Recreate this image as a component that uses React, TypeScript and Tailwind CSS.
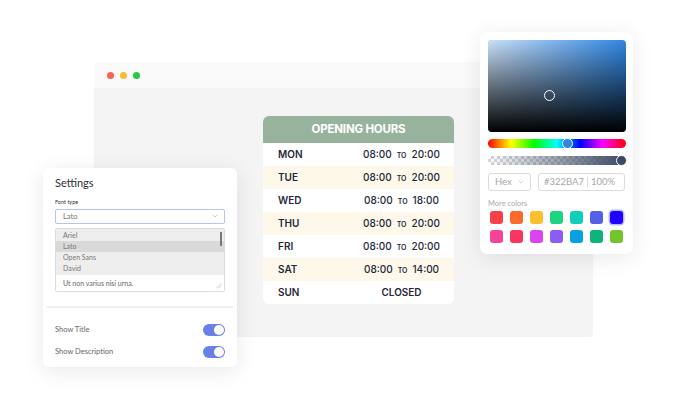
import { ChevronDown } from "lucide-react"

type Hours = {
    day: string
    open?: string
    close?: string
}

const hours: Hours[] = [
    { day: "MON", open: "08:00", close: "20:00" },
    { day: "TUE", open: "08:00", close: "20:00" },
    { day: "WED", open: "08:00", close: "18:00" },
    { day: "THU", open: "08:00", close: "20:00" },
    { day: "FRI", open: "08:00", close: "20:00" },
    { day: "SAT", open: "08:00", close: "14:00" },
    { day: "SUN" }
]

const swatches = [
    ["bg-[#f8404a]", "bg-[#fb6a2b]", "bg-[#fbc02d]", "bg-[#1ed47e]", "bg-[#10cfb8]", "bg-[#5560e9]", "bg-[#2200ff]"],
    ["bg-[#f34497]", "bg-[#fb355d]", "bg-[#d946ef]", "bg-[#8b5cf6]", "bg-[#0aa0e8]", "bg-[#0eb27c]", "bg-[#74c52c]"]
]

function OpeningHours() {
    return (
        <div className="w-[191px] overflow-hidden rounded-[6px] bg-white font-['Inter',sans-serif] text-[#1f2a3c]">
            <div className="flex h-[27px] items-center justify-center bg-[#98b39d] text-[11.5px] font-bold tracking-[-0.2px] text-white">
                OPENING HOURS
            </div>
            {hours.map((row, i) => (
                <div
                    key={row.day}
                    className={`flex h-[23px] items-center pl-[15px] pr-[16px] ${i % 2 === 1 ? "bg-[#fdf8ea]" : "bg-white"}`}
                >
                    <div className="flex-1 text-[10px] font-semibold">{row.day}</div>
                    <div className="flex w-[73px] items-baseline justify-center text-[10px] font-medium">
                        {row.open ? (
                            <>
                                <span>{row.open}</span>
                                <span className="mx-[5px] text-[7px] font-semibold">TO</span>
                                <span>{row.close}</span>
                            </>
                        ) : (
                            <span className="text-[10px] font-semibold">CLOSED</span>
                        )}
                    </div>
                </div>
            ))}
        </div>
    )
}

function Toggle() {
    return (
        <div className="flex h-[12px] w-[22px] items-center justify-end rounded-full bg-[#6a80e6] pr-[1px]">
            <div className="h-[10px] w-[10px] rounded-full bg-white" />
        </div>
    )
}

function SettingsPanel() {
    return (
        <div className="absolute left-[43px] top-[168px] h-[199px] w-[194px] rounded-[6px] bg-white font-['Lato',sans-serif] shadow-[0_4px_22px_rgba(0,0,0,0.09)]">
            <div className="px-[12px] pt-[7px]">
                <div className="text-[11px] text-[#2b2f36]">Settings</div>
                <div className="mt-[6px] text-[5.5px] text-[#333]">Font type</div>
                <div className="mt-[3px] flex h-[15px] items-center justify-between rounded-[2px] border border-[#b9c3f2] pl-[7px] pr-[5px] text-[7.5px] text-[#777]">
                    <span>Lato</span>
                    <ChevronDown className="h-[8px] w-[8px] text-[#999]" strokeWidth={1.5} />
                </div>
                <div className="mt-[4px] rounded-[2px] border border-[#dcdcdc]">
                    <div className="relative bg-[#eeeeee] py-[1px] text-[7px] text-[#777]">
                        <div className="flex h-[11px] items-center pl-[7px]">Ariel</div>
                        <div className="flex h-[11px] items-center bg-[#d9d9d9] pl-[7px]">Lato</div>
                        <div className="flex h-[11px] items-center pl-[7px]">Open Sans</div>
                        <div className="flex h-[11px] items-center pl-[7px]">David</div>
                        <div className="absolute right-[2px] top-[3px] h-[14px] w-[2px] bg-[#7a7a7a]" />
                    </div>
                    <div className="relative flex h-[16px] items-center bg-white pl-[7px] text-[7px] text-[#666]">
                        Ut non varius nisi urna.
                        <svg className="absolute bottom-[2px] right-[2px]" width="7" height="7" viewBox="0 0 7 7">
                            <path d="M1 6.5 L6.5 1 M3.5 6.5 L6.5 3.5" stroke="#c8c8c8" strokeWidth="0.8" />
                        </svg>
                    </div>
                </div>
            </div>
            <div className="mx-[4px] mt-[14px] h-[2px] bg-[#eeeeee]" />
            <div className="px-[12px] pt-[16px] text-[7.5px] text-[#666]">
                <div className="flex h-[12px] items-center justify-between">
                    <span>Show Title</span>
                    <Toggle />
                </div>
                <div className="mt-[10px] flex h-[12px] items-center justify-between">
                    <span>Show Description</span>
                    <Toggle />
                </div>
            </div>
        </div>
    )
}

function ColorPicker() {
    return (
        <div className="absolute left-[480px] top-[32px] h-[222px] w-[153px] rounded-[7px] bg-white px-[8px] pt-[8px] font-['Lato',sans-serif] shadow-[0_4px_22px_rgba(0,0,0,0.09)]">
            <div className="relative h-[92px] w-[138px] overflow-hidden rounded-[4px] bg-[#2f86e3]">
                <div className="absolute inset-0 bg-gradient-to-r from-white/75 to-transparent" />
                <div className="absolute inset-0 bg-gradient-to-b from-transparent to-black" />
                <div className="absolute left-[56px] top-[50px] h-[11px] w-[11px] rounded-full border-[1.5px] border-white" />
            </div>
            <div className="relative mt-[7px] h-[9px] w-[138px] rounded-full bg-[linear-gradient(to_right,#ff0000,#ffff00,#00ff00,#00ffff,#0000ff,#ff00ff,#ff0000)]">
                <div className="absolute left-[74px] top-[-1px] h-[11px] w-[11px] rounded-full border-[1.5px] border-white bg-[#2f86e3]" />
            </div>
            <div className="relative mt-[8px] h-[9px] w-[138px] rounded-full bg-[repeating-conic-gradient(#d6d6d6_0_25%,#ffffff_0_50%)] bg-[length:6px_6px]">
                <div className="absolute inset-0 rounded-full bg-gradient-to-r from-transparent to-[#3a4a62]" />
                <div className="absolute right-[-1px] top-[-1px] h-[11px] w-[11px] rounded-full border-[1.5px] border-white bg-[#3a4a62]" />
            </div>
            <div className="mt-[8px] flex gap-[7px] text-[9.5px] text-[#a8a8a8]">
                <div className="flex h-[18px] w-[43px] items-center justify-between rounded-[3px] border border-[#dcdcdc] pl-[6px] pr-[5px]">
                    <span>Hex</span>
                    <ChevronDown className="h-[8px] w-[8px]" strokeWidth={1.5} />
                </div>
                <div className="flex h-[18px] flex-1 items-center rounded-[3px] border border-[#dcdcdc] pl-[5px]">
                    <span>#322BA7</span>
                    <span className="mx-[3px] h-[10px] w-px bg-[#dcdcdc]" />
                    <span>100%</span>
                </div>
            </div>
            <div className="mt-[7px] text-[7.5px] text-[#aaaaaa]">More colors</div>
            <div className="mt-[2px] flex flex-col gap-[6px]">
                {swatches.map((row, r) => (
                    <div key={r} className="flex gap-[7px] pl-[2px]">
                        {row.map((c, i) => (
                            <div
                                key={c}
                                className={`h-[13px] w-[13px] rounded-[3px] ${c} ${r === 0 && i === 6 ? "ring-[1.5px] ring-[#b3bcff]" : ""}`}
                            />
                        ))}
                    </div>
                ))}
            </div>
        </div>
    )
}

export default function App() {
    return (
        <div className="relative h-[400px] w-[685px] overflow-hidden bg-white">
            <div className="ml-[94px] mt-[62px] w-[499px] overflow-hidden rounded-[4px]">
                <div className="flex h-[26px] items-center gap-[6px] bg-[#fafafa] pl-[13px]">
                    <div className="h-[7px] w-[7px] rounded-full bg-[#fe5f57]" />
                    <div className="h-[7px] w-[7px] rounded-full bg-[#febc2e]" />
                    <div className="h-[7px] w-[7px] rounded-full bg-[#28c840]" />
                </div>
                <div className="h-[249px] bg-[#f4f4f4] pl-[169px] pt-[28px]">
                    <OpeningHours />
                </div>
            </div>
            <SettingsPanel />
            <ColorPicker />
        </div>
    )
}
